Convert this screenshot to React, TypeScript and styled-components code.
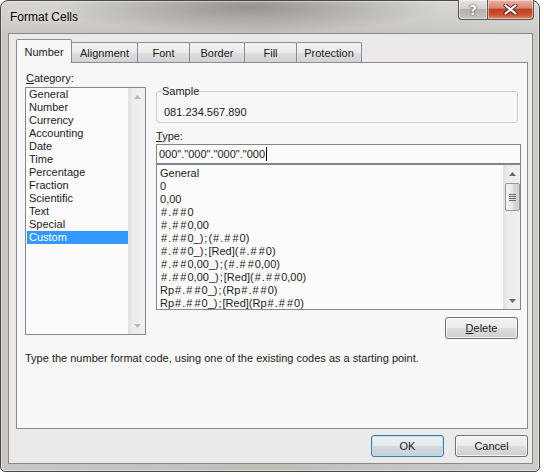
import styled, { createGlobalStyle } from 'styled-components';

const GlobalStyle = createGlobalStyle`
    html, body {
        margin: 0;
        padding: 0;
        background: #ffffff;
    }
    body {
        font-family: "Liberation Sans", Arial, sans-serif;
        font-size: 11px;
        color: #1b1b1b;
    }
    * {
        box-sizing: border-box;
    }
`;

const Window = styled.div`
    width: 540px;
    height: 472px;
    display: flex;
    flex-direction: column;
    padding: 0 6px 7px 7px;
    border: 1px solid #4b4845;
    border-radius: 8px 8px 5px 5px;
    background:
        radial-gradient(ellipse 190px 26px at 46% 6px, rgba(80, 76, 72, 0.45), rgba(80, 76, 72, 0)),
        linear-gradient(to bottom, rgba(255, 255, 255, 0.3), rgba(255, 255, 255, 0) 34px),
        linear-gradient(90deg, #c9c6c3 0%, #c1beba 50%, #cdcbc8 100%);
    box-shadow: inset 0 0 0 1px rgba(255, 255, 255, 0.4);
`;

const TitleBar = styled.div`
    height: 32px;
    display: flex;
    justify-content: space-between;
    align-items: flex-start;
    margin-right: -1px;
`;

const Title = styled.div`
    padding: 9px 0 0 2px;
    font-size: 12px;
    line-height: 15px;
    color: #000;
    text-shadow: 0 0 6px rgba(255, 255, 255, 0.9);
`;

const CaptionGroup = styled.div`
    display: flex;
    margin-top: -1px;
`;

const CaptionButton = styled.div<{ $kind: 'help' | 'close' }>`
    width: ${props => (props.$kind === 'help' ? 29 : 47)}px;
    height: 20px;
    display: flex;
    align-items: center;
    justify-content: center;
    border: 1px solid #5b5856;
    border-top: none;
    ${props =>
        props.$kind === 'help'
            ? `
        border-right: none;
        border-radius: 0 0 0 4px;
        background: linear-gradient(#e6e4e2 0%, #d3d0cd 45%, #b3b0ad 50%, #c7c4c1 100%);
    `
            : `
        border-radius: 0 0 4px 0;
        background: linear-gradient(#eab2a4 0%, #d98672 42%, #c2401f 50%, #cc5234 78%, #df8c6e 100%);
    `};
    box-shadow: inset 0 0 0 1px rgba(255, 255, 255, 0.45);
`;

const HelpGlyph = styled.span`
    font: bold 14px "DejaVu Sans", sans-serif;
    color: #ffffff;
    text-shadow: 0 0 1px #333, 0 0 2px #555;
    line-height: 14px;
`;

const Client = styled.div`
    flex: 1;
    display: flex;
    flex-direction: column;
    border: 1px solid #8a8784;
    background: #eceae8;
    padding: 5px 4px 6px 7px;
`;

const TabRow = styled.div`
    display: flex;
    align-items: flex-end;
    height: 23px;
    position: relative;
    z-index: 1;
`;

const Tab = styled.div<{ $active?: boolean; $w: number }>`
    width: ${props => props.$w}px;
    height: ${props => (props.$active ? 24 : 20)}px;
    margin-bottom: ${props => (props.$active ? -1 : 0)}px;
    margin-left: -1px;
    &:first-child {
        margin-left: 0;
    }
    display: flex;
    align-items: center;
    justify-content: center;
    padding-top: ${props => (props.$active ? 0 : 1)}px;
    border: 1px solid #898c95;
    border-bottom: none;
    border-radius: 2px 2px 0 0;
    background: ${props =>
        props.$active ? '#f7f7f7' : 'linear-gradient(#f3f3f3 0%, #ebebeb 50%, #dedede 51%, #d2d2d2 100%)'};
    white-space: nowrap;
`;

const Panel = styled.div`
    flex: 1;
    display: flex;
    flex-direction: column;
    border: 1px solid #898c95;
    background: #f7f7f7;
    padding: 9px 6px 0 8px;
`;

const Columns = styled.div`
    display: grid;
    grid-template-columns: 121px 1fr;
    column-gap: 10px;
    align-items: start;
`;

const Column = styled.div`
    display: flex;
    flex-direction: column;
`;

const FieldLabel = styled.div<{ $gap: number; $top?: number; $indent?: number }>`
    line-height: 13px;
    margin: ${props => props.$top ?? 0}px 0 ${props => props.$gap}px ${props => props.$indent ?? 0}px;
`;

const ListBox = styled.div<{ $h: number }>`
    height: ${props => props.$h}px;
    display: flex;
    border: 1px solid #828790;
    background: #fbfbfb;
`;

const ListItems = styled.div<{ $top: number }>`
    flex: 1;
    overflow: hidden;
    padding: ${props => props.$top}px 0 0 1px;
`;

const ListItem = styled.div<{ $selected?: boolean }>`
    height: 13px;
    line-height: 13px;
    padding-left: 2px;
    white-space: nowrap;
    background: ${props => (props.$selected ? '#3399ff' : 'transparent')};
    color: ${props => (props.$selected ? '#ffffff' : 'inherit')};
`;

/* Tahoma draws '#' and ';' wider than Arial does */
const WideChar = styled.span`
    padding: 0 1px;
`;

const ScrollBar = styled.div`
    width: 17px;
    display: flex;
    flex-direction: column;
    align-items: center;
    background: linear-gradient(90deg, #e1e1e1 0%, #ececec 25%, #f0f0f0 100%);
    border-left: 1px solid #e4e4e4;
`;

const ScrollArrow = styled.div`
    width: 100%;
    height: 17px;
    display: flex;
    align-items: center;
    justify-content: center;
`;

const ScrollSpace = styled.div`
    flex: 1;
`;

const Thumb = styled.div`
    width: 15px;
    height: 28px;
    margin-top: 1px;
    display: flex;
    align-items: center;
    justify-content: center;
    border: 1px solid #979797;
    border-radius: 2px;
    background: linear-gradient(90deg, #f4f4f4 0%, #e8e8e8 50%, #d8d8d8 51%, #d2d2d2 100%);
`;

const SampleGroup = styled.fieldset`
    margin: 13px 3px 0 0;
    padding: 0 4px 3px;
    min-width: 0;
    border: 1px solid #c9cfd3;
    border-radius: 3px;
`;

const SampleLegend = styled.legend`
    padding: 0 1px;
    line-height: 13px;
`;

const SampleValue = styled.div`
    line-height: 13px;
    padding: 8px 0 0 3px;
`;

const TextBox = styled.div`
    height: 20px;
    display: flex;
    align-items: center;
    padding-left: 2px;
    border: 1px solid #7f8489;
    background: #fbfbfb;
    white-space: nowrap;
`;

const Caret = styled.span`
    width: 1px;
    height: 14px;
    margin-left: 1px;
    background: #000;
`;

const Button = styled.button<{ $default?: boolean }>`
    width: 73px;
    height: 22px;
    padding: 0;
    font: 11px "Liberation Sans", Arial, sans-serif;
    color: #1b1b1b;
    border: 1px solid ${props => (props.$default ? '#3c7fb1' : '#707070')};
    border-radius: 3px;
    background: ${props =>
        props.$default
            ? 'linear-gradient(#eef2f4 0%, #e4e9ec 49%, #d3dade 50%, #c9d1d6 100%)'
            : 'linear-gradient(#f2f2f2 0%, #ebebeb 49%, #dddddd 50%, #cfcfcf 100%)'};
    box-shadow: inset 0 0 0 1px ${props => (props.$default ? 'rgba(180, 222, 245, 0.9)' : 'rgba(255, 255, 255, 0.75)')};
`;

const DeleteButton = styled(Button)`
    align-self: flex-end;
    margin: 7px 3px 0 0;
`;

const Description = styled.div`
    margin-top: 13px;
    line-height: 13px;
`;

const Footer = styled.div`
    display: flex;
    justify-content: flex-end;
    gap: 11px;
    margin-top: 6px;
`;

const Arrow = ({ up, color }: { up?: boolean; color: string }) => (
    <svg width="7" height="4" viewBox="0 0 7 4">
        <path d={up ? 'M0 4 L3.5 0 L7 4 Z' : 'M0 0 L3.5 4 L7 0 Z'} fill={color} />
    </svg>
);

const Grip = () => (
    <svg width="7" height="7" viewBox="0 0 7 7">
        {[0, 2, 4, 6].map(y => (
            <rect key={y} x="0" y={y} width="7" height="1" fill="#6d6d6d" />
        ))}
    </svg>
);

const CloseGlyph = () => (
    <svg width="15" height="11" viewBox="0 0 15 11">
        <path d="M2.5 1.5 L12.5 9.5 M12.5 1.5 L2.5 9.5" stroke="#4a2a22" strokeWidth="4" strokeLinecap="round" />
        <path d="M2.5 1.5 L12.5 9.5 M12.5 1.5 L2.5 9.5" stroke="#ffffff" strokeWidth="2.2" strokeLinecap="round" />
    </svg>
);

const FormatCode = ({ code }: { code: string }) => (
    <>
        {code.split('').map((ch, i) =>
            ch === '#' || ch === ';' ? <WideChar key={i}>{ch}</WideChar> : ch
        )}
    </>
);

const tabs = [
    { label: 'Number', w: 56 },
    { label: 'Alignment', w: 67 },
    { label: 'Font', w: 53 },
    { label: 'Border', w: 56 },
    { label: 'Fill', w: 53 },
    { label: 'Protection', w: 66 },
];

const categories = [
    'General',
    'Number',
    'Currency',
    'Accounting',
    'Date',
    'Time',
    'Percentage',
    'Fraction',
    'Scientific',
    'Text',
    'Special',
    'Custom',
];

const formats = [
    'General',
    '0',
    '0,00',
    '#.##0',
    '#.##0,00',
    '#.##0_);(#.##0)',
    '#.##0_);[Red](#.##0)',
    '#.##0,00_);(#.##0,00)',
    '#.##0,00_);[Red](#.##0,00)',
    'Rp#.##0_);(Rp#.##0)',
    'Rp#.##0_);[Red](Rp#.##0)',
];

export default function App() {
    return (
        <>
            <GlobalStyle />
            <Window>
                <TitleBar>
                    <Title>Format Cells</Title>
                    <CaptionGroup>
                        <CaptionButton $kind="help">
                            <HelpGlyph>?</HelpGlyph>
                        </CaptionButton>
                        <CaptionButton $kind="close">
                            <CloseGlyph />
                        </CaptionButton>
                    </CaptionGroup>
                </TitleBar>
                <Client>
                    <TabRow>
                        {tabs.map((t, i) => (
                            <Tab key={t.label} $w={t.w} $active={i === 0}>
                                {t.label}
                            </Tab>
                        ))}
                    </TabRow>
                    <Panel>
                        <Columns>
                            <Column>
                                <FieldLabel $gap={2} $indent={1}>
                                    <u>C</u>ategory:
                                </FieldLabel>
                                <ListBox $h={248}>
                                    <ListItems $top={0}>
                                        {categories.map(c => (
                                            <ListItem key={c} $selected={c === 'Custom'}>
                                                {c}
                                            </ListItem>
                                        ))}
                                    </ListItems>
                                    <ScrollBar>
                                        <ScrollArrow>
                                            <Arrow up color="#b9b9b9" />
                                        </ScrollArrow>
                                        <ScrollSpace />
                                        <ScrollArrow>
                                            <Arrow color="#b9b9b9" />
                                        </ScrollArrow>
                                    </ScrollBar>
                                </ListBox>
                            </Column>
                            <Column>
                                <SampleGroup>
                                    <SampleLegend>Sample</SampleLegend>
                                    <SampleValue>081.234.567.890</SampleValue>
                                </SampleGroup>
                                <FieldLabel $gap={1} $top={7}>
                                    <u>T</u>ype:
                                </FieldLabel>
                                <TextBox>
                                    000"."000"."000"."000
                                    <Caret />
                                </TextBox>
                                <ListBox $h={146}>
                                    <ListItems $top={2}>
                                        {formats.map(f => (
                                            <ListItem key={f}>
                                                <FormatCode code={f} />
                                            </ListItem>
                                        ))}
                                    </ListItems>
                                    <ScrollBar>
                                        <ScrollArrow>
                                            <Arrow up color="#6a6a6a" />
                                        </ScrollArrow>
                                        <Thumb>
                                            <Grip />
                                        </Thumb>
                                        <ScrollSpace />
                                        <ScrollArrow>
                                            <Arrow color="#6a6a6a" />
                                        </ScrollArrow>
                                    </ScrollBar>
                                </ListBox>
                                <DeleteButton>
                                    <u>D</u>elete
                                </DeleteButton>
                            </Column>
                        </Columns>
                        <Description>
                            Type the number format code, using one of the existing codes as a starting point.
                        </Description>
                    </Panel>
                    <Footer>
                        <Button $default>OK</Button>
                        <Button>Cancel</Button>
                    </Footer>
                </Client>
            </Window>
        </>
    );
}
